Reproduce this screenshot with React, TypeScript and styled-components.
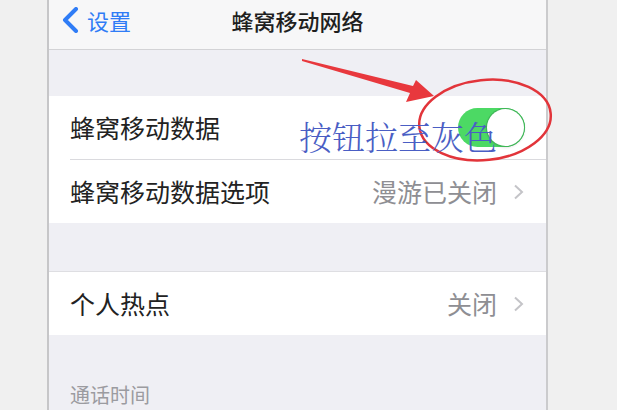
import React from 'react';
import styled, { createGlobalStyle } from 'styled-components';

const GlobalStyle = createGlobalStyle`
  html, body {
    margin: 0;
    padding: 0;
    background: #f0f0f0;
  }
  body {
    font-family: "Noto Sans CJK SC", "Noto Sans", sans-serif;
  }
`;

const Page = styled.div`
  position: relative;
  width: 617px;
  height: 410px;
  overflow: hidden;
  background: #f0f0f0;
`;

const Phone = styled.div`
  margin-left: 47px;
  width: 497px;
  height: 410px;
  border-left: 2px solid #c6c6c8;
  border-right: 2px solid #cbcbcd;
  background: #efeff4;
`;

const NavBar = styled.header`
  height: 50px;
  padding-bottom: 10px;
  box-sizing: border-box;
  border-bottom: 1px solid #d3d3d6;
  background: #f7f7f8;
  display: grid;
  grid-template-columns: 1fr auto 1fr;
  align-items: center;
`;

const BackButton = styled.div`
  display: flex;
  align-items: center;
  gap: 8px;
  padding-left: 12px;
  color: #2f7cf6;
  font-size: 22px;
  line-height: 1;
`;

const NavTitle = styled.div`
  font-size: 22px;
  font-weight: 500;
  color: #1f1f1f;
  line-height: 1;
`;

const SectionGap = styled.div<{ $h: number }>`
  height: ${(p) => p.$h}px;
`;

const Group = styled.div<{ $topLine?: boolean }>`
  background: #ffffff;
  border-top: ${(p) => (p.$topLine ? '1px solid #dedee2' : 'none')};
`;

const Row = styled.div`
  padding-left: 21px;
`;

const RowInner = styled.div<{ $divider?: boolean }>`
  height: 63px;
  display: flex;
  align-items: center;
  padding-right: 21px;
  border-bottom: ${(p) => (p.$divider ? '1px solid #dadade' : 'none')};
`;

const Label = styled.span`
  font-size: 25px;
  color: #222222;
  line-height: 1;
`;

const Detail = styled.span`
  margin-left: auto;
  font-size: 25px;
  color: #8e8e93;
  line-height: 1;
`;

const Chevron = styled.svg`
  margin-left: 16px;
  width: 12px;
  height: 16px;
`;

const Toggle = styled.div<{ $on: boolean }>`
  margin-left: auto;
  width: 67px;
  height: 39px;
  border-radius: 20px;
  background: ${(p) => (p.$on ? '#4cd964' : '#e5e5ea')};
  display: flex;
  align-items: center;
  justify-content: ${(p) => (p.$on ? 'flex-end' : 'flex-start')};
  padding: 1px;
  box-sizing: border-box;
`;

const Knob = styled.div`
  width: 37px;
  height: 37px;
  border-radius: 50%;
  background: #ffffff;
  box-shadow: 0 0 0 1px #3fb457, 0 1px 3px rgba(0, 0, 0, 0.2);
`;

const SectionHeader = styled.div`
  padding: 48px 21px 0;
  font-size: 20px;
  line-height: 24px;
  color: #9b9ba0;
`;

const Markup = styled.svg`
  position: absolute;
  left: 0;
  top: 0;
  width: 617px;
  height: 410px;
  pointer-events: none;
`;

const Note = styled.div`
  position: absolute;
  left: 299px;
  top: 117px;
  font-family: "Noto Serif CJK SC", "Noto Sans CJK SC", serif;
  font-weight: 300;
  font-size: 33px;
  line-height: 38px;
  color: #4a5ec4;
  pointer-events: none;
`;

const ChevronRight = () => (
  <Chevron viewBox="0 0 12 16">
    <polyline points="2,1.5 9,8 2,14.5" fill="none" stroke="#c4c4c8" strokeWidth="2" />
  </Chevron>
);

export default function App() {
  return (
    <>
      <GlobalStyle />
      <Page>
        <Phone>
          <NavBar>
            <BackButton>
              <svg width="18" height="26" viewBox="0 0 18 26">
                <polyline points="15,2 4,13 15,24" fill="none" stroke="#2f7cf6" strokeWidth="4" strokeLinecap="round" strokeLinejoin="round" />
              </svg>
              设置
            </BackButton>
            <NavTitle>蜂窝移动网络</NavTitle>
            <div />
          </NavBar>

          <SectionGap $h={46} />
          <Group>
            <Row>
              <RowInner $divider>
                <Label>蜂窝移动数据</Label>
                <Toggle $on>
                  <Knob />
                </Toggle>
              </RowInner>
            </Row>
            <Row>
              <RowInner>
                <Label>蜂窝移动数据选项</Label>
                <Detail>漫游已关闭</Detail>
                <ChevronRight />
              </RowInner>
            </Row>
          </Group>

          <SectionGap $h={48} />
          <Group $topLine>
            <Row>
              <RowInner>
                <Label>个人热点</Label>
                <Detail>关闭</Detail>
                <ChevronRight />
              </RowInner>
            </Row>
          </Group>

          <SectionHeader>通话时间</SectionHeader>
        </Phone>

        <Markup viewBox="0 0 617 410">
          <polygon
            points="302,59 413,86 416,80 434,96 406,102 410,93 302,61"
            fill="#e8383d"
          />
          <ellipse
            cx="485"
            cy="120"
            rx="66"
            ry="40"
            transform="rotate(-6 485 120)"
            fill="none"
            stroke="#e2343a"
            strokeWidth="2.5"
          />
        </Markup>
        <Note>按钮拉至灰色</Note>
      </Page>
    </>
  );
}
